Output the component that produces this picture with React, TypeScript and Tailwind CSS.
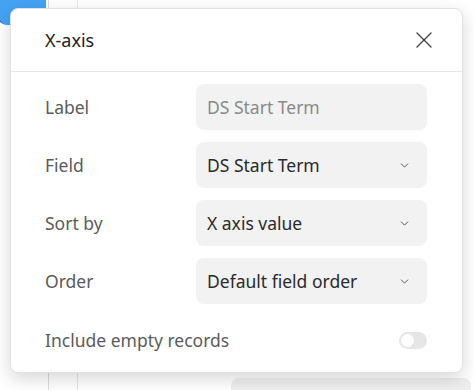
import { ChevronDown, X } from "lucide-react";

const ROWS = [
  { label: "Label", value: "DS Start Term", placeholder: true },
  { label: "Field", value: "DS Start Term" },
  { label: "Sort by", value: "X axis value" },
  { label: "Order", value: "Default field order" },
];

export default function App() {
  return (
    <div className="relative h-[390px] w-[474px] overflow-hidden bg-white font-['Noto_Sans',sans-serif]">
      {/* background app behind the popover */}
      <div className="absolute left-[-4px] top-[-20px] h-[45px] w-[50px] rounded-xl border-t-2 border-l-2 border-[#2a5b9c] bg-[#45a2f3]" />
      <div className="absolute left-[48px] top-0 h-full w-px bg-[#dcdcdc]" />
      <div className="absolute left-[77px] top-0 h-full w-px bg-[#e4e4e4]" />
      <div className="absolute left-[231px] top-[378px] h-[30px] w-[240px] rounded-lg bg-[#efefef]" />

      <div className="absolute left-[10px] top-[8px] flex h-[365px] w-[453px] flex-col rounded-lg border border-[#e2e2e2] bg-white shadow-[0_6px_18px_rgba(0,0,0,0.16)]">
        <div className="flex h-[63px] items-center justify-between border-b border-[#e6e6e6] pl-[34px] pr-[24px]">
          <span className="text-[18px] text-[#222]">X-axis</span>
          <X className="h-[28px] w-[28px] text-[#444]" strokeWidth={1.2} />
        </div>
        <div className="flex flex-col gap-3 pl-[34px] pr-[35px] pt-[12px]">
          {ROWS.map((r) => (
            <div key={r.label} className="flex items-center">
              <span className="w-[151px] text-[17.5px] text-[#5b5b5b]">{r.label}</span>
              <div className="flex h-[46px] flex-1 items-center justify-between rounded-lg bg-[#f2f2f2] pl-[11px] pr-[16px]">
                <span className={`text-[17.5px] ${r.placeholder ? "text-[#8a8a8a]" : "text-[#2b2b2b]"}`}>{r.value}</span>
                {!r.placeholder && <ChevronDown className="h-[13px] w-[13px] text-[#444]" strokeWidth={1.6} />}
              </div>
            </div>
          ))}
          <div className="mt-[11px] flex items-center justify-between">
            <span className="text-[17.5px] text-[#5b5b5b]">Include empty records</span>
            <div className="flex h-[17px] w-[28px] items-center rounded-full bg-[#e6e6e6] px-[2px]">
              <div className="h-[13px] w-[13px] rounded-full bg-white" />
            </div>
          </div>
        </div>
      </div>
    </div>
  );
}
